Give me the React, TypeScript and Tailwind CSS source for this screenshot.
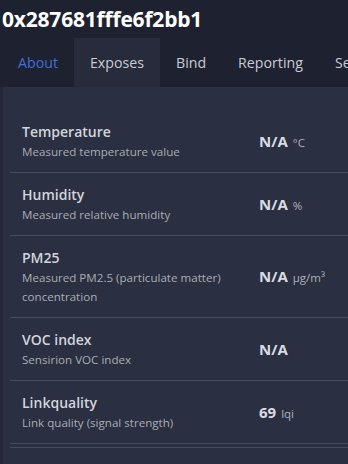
import React from "react";

const rows = [
  { t: "Temperature", d: ["Measured temperature value"], v: "N/A", u: "°C" },
  { t: "Humidity", d: ["Measured relative humidity"], v: "N/A", u: "%" },
  { t: "PM25", d: ["Measured PM2.5 (particulate matter) concentration"], v: "N/A", u: "µg/m³" },
  { t: "VOC index", d: ["Sensirion VOC index"], v: "N/A", u: "" },
  { t: "Linkquality", d: ["Link quality (signal strength)"], v: "69", u: "lqi" },
];

export default function App() {
  return (
    <div
      className="w-[348px] h-[464px] overflow-hidden bg-[#1e2130] flex flex-col"
      style={{ fontFamily: '"Open Sans", "Noto Sans", sans-serif' }}
    >
      <div className="h-[38px] shrink-0 pl-[2px] flex items-center">
        <h1 className="text-[21px] font-bold text-white tracking-[-0.2px] leading-none">0x287681fffe6f2bb1</h1>
      </div>
      <div className="h-[49px] shrink-0 flex pl-[2px] whitespace-nowrap text-[14.2px] overflow-hidden">
        <div className="px-4 flex items-center text-[#3f70d8]">About</div>
        <div className="px-4 flex items-center text-[#c9ccd4] bg-[#272b3c]">Exposes</div>
        <div className="px-4 flex items-center text-[#c9ccd4]">Bind</div>
        <div className="px-4 flex items-center text-[#c9ccd4]">Reporting</div>
        <div className="px-4 flex items-center text-[#c9ccd4]">Settings</div>
      </div>
      <div className="flex-1 border-l-[3px] border-[#232738] bg-[#2a2f41] pl-[7px] pt-[23px]">
        <div className="flex flex-col">
          {rows.map((r) => (
            <div key={r.t} className="flex items-center border-b border-[#464c5d]">
              <div className="w-[237px] shrink-0 px-3 pt-[12px] pb-[11px]">
                <div className="text-[14px] font-semibold text-[#d2d5dc] leading-[20px]">{r.t}</div>
                <div className="text-[11.6px] text-[#a9adb7] leading-[19px]">{r.d[0]}</div>
              </div>
              <div className="px-3 flex items-baseline gap-[5px]">
                <span className="text-[15px] font-bold text-[#d8dbe1]">{r.v}</span>
                {r.u && <span className="text-[11.5px] text-[#adb1bb]">{r.u}</span>}
              </div>
            </div>
          ))}
          <div className="h-[4px] border-b border-[#464c5d]" />
        </div>
      </div>
    </div>
  );
}
